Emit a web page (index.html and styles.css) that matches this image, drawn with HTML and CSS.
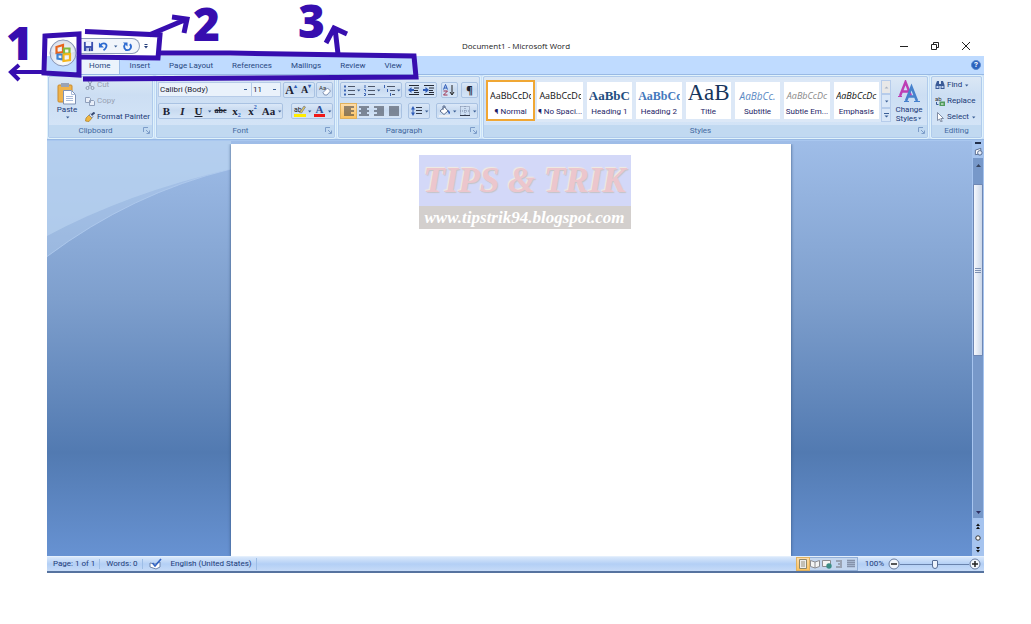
FILE: index.html
```html
<!DOCTYPE html>
<html lang="en">
<head>
    <meta charset="UTF-8">
    <meta name="viewport" content="width=device-width, initial-scale=1.0">
    <title>Document1 - Microsoft Word</title>
    <link rel="stylesheet" href="styles.css">
</head>
<body>
    <!-- shared icons -->
    <svg class="defs" aria-hidden="true">
        <symbol id="caret" viewBox="0 0 5 5"><path d="M1 1.500h3.400L2.700 3.500z" fill="#3b5f96"/></symbol>
        <symbol id="launch" viewBox="0 0 7 7"><path d="M.5 5V.5H5M3 3l3 3M6.500 3.500v3h-3" fill="none" stroke="#7d9dc9"/></symbol>
        <symbol id="lines-left" viewBox="0 0 12 11"><path d="M1 1.500h10M1 3.500h7M1 5.500h10M1 7.500h7M1 9.500h10" stroke="#2b2f3a"/></symbol>
        <symbol id="lines-center" viewBox="0 0 12 11"><path d="M1 1.500h10M3 3.500h6M1 5.500h10M3 7.500h6M1 9.500h10" stroke="#2b2f3a"/></symbol>
        <symbol id="lines-right" viewBox="0 0 12 11"><path d="M1 1.500h10M4 3.500h7M1 5.500h10M4 7.500h7M1 9.500h10" stroke="#2b2f3a"/></symbol>
        <symbol id="lines-full" viewBox="0 0 12 11"><path d="M1 1.500h10M1 3.500h10M1 5.500h10M1 7.500h10M1 9.500h10" stroke="#2b2f3a"/></symbol>
    </svg>

    <div class="window">
        <header class="titlebar">
            <button class="office-button" aria-label="Office Button">
                <svg viewBox="0 0 28 28">
                    <defs>
                        <radialGradient id="orb" cx=".5" cy=".8" r=".8"><stop offset="0" stop-color="#fff"/><stop offset=".55" stop-color="#dfe5f0"/><stop offset="1" stop-color="#a9b4cc"/></radialGradient>
                    </defs>
                    <circle cx="14" cy="14" r="13" fill="url(#orb)" stroke="#8895b5"/>
                    <path d="M2.500 13a11.500 11.500 0 0 1 23 0q-11.500 3-23 0z" fill="#fff" opacity=".55"/>
                    <g fill="none" stroke-width="2.200">
                        <path d="M7.500 8l6.500-2v7l-6.500 1z" stroke="#e8641b"/>
                        <path d="M15 9.500h5.500v5H15z" stroke="#82b93c"/>
                        <path d="M8.500 15.500h5v5l-5-1z" stroke="#3f83d2"/>
                        <path d="M14.500 15.500l6.500-.500v6l-6.500 1z" stroke="#f4b61c"/>
                    </g>
                </svg>
            </button>
            <div class="quick-access">
                <button aria-label="Save"><svg viewBox="0 0 12 12"><path d="M1 1h10v10H1z" fill="#3a4fae"/><path d="M3 1h6v4.500H3z" fill="#eef3ff"/><path d="M3.500 7.500h5V11h-5z" fill="#b9c6ea"/><path d="M6.500 8h1.500v3H6.500z" fill="#26357f"/></svg></button>
                <button aria-label="Undo"><svg viewBox="0 0 12 12"><path d="M2.500 4.500C6 1 10.500 3 9 6.500Q8.300 8.500 6 10" fill="none" stroke="#2e6bd0" stroke-width="2"/><path d="M1 1.500v5.500h5.500z" fill="#2e6bd0"/></svg></button>
                <svg class="caret"><use href="#caret"/></svg>
                <button aria-label="Repeat"><svg viewBox="0 0 12 12"><path d="M3.500 3.500C1 6 3 10 6 10s5.500-4 2.500-6.500" fill="none" stroke="#2e6bd0" stroke-width="2"/><path d="M1 1.500H6V6z" fill="#2e6bd0"/></svg></button>
            </div>
            <button class="customize" aria-label="Customize Quick Access Toolbar"><svg viewBox="0 0 6 8"><path d="M1.500 2.500h3" stroke="#27407c"/><path d="M1 4h4L3 6.500z" fill="#27407c"/></svg></button>
            <h1>Document1 - Microsoft Word</h1>
            <div class="window-buttons">
                <button aria-label="Minimize"><svg viewBox="0 0 10 10"><path d="M1 5.500h8" stroke="#222"/></svg></button>
                <button aria-label="Restore"><svg viewBox="0 0 10 10"><path d="M1.500 3.500h5v5h-5zM3.500 3V1.500h5v5H7" fill="none" stroke="#222"/></svg></button>
                <button aria-label="Close"><svg viewBox="0 0 10 10"><path d="M1 1l8 8M9 1L1 9" stroke="#222"/></svg></button>
            </div>
        </header>

        <nav class="tabs">
            <a href="#" class="active">Home</a>
            <a href="#">Insert</a>
            <a href="#">Page Layout</a>
            <a href="#">References</a>
            <a href="#">Mailings</a>
            <a href="#">Review</a>
            <a href="#">View</a>
            <button class="help" aria-label="Help">?</button>
        </nav>

        <div class="ribbon">
            <section class="group clipboard">
                <div class="tools">
                    <button class="big paste">
                        <svg viewBox="0 0 20 23"><rect x="1" y="3" width="14" height="17" rx="1" fill="#efb34a" stroke="#c98a2c"/><rect x="4" y="1" width="8" height="4" fill="#9aa3b4"/><path d="M6.500 8.500h8l4 4v9.500h-12z" fill="#fff" stroke="#7e92b5"/><path d="M14.500 8.500v4h4M9 14.500h7M9 16.500h7M9 18.500h7" fill="none" stroke="#a9bbd9"/></svg>
                        <span>Paste</span>
                        <svg class="caret"><use href="#caret"/></svg>
                    </button>
                    <div class="stack">
                        <button class="item off"><svg viewBox="0 0 10 10"><path d="M3 1l3.500 6M7 1L3.500 7" stroke="#8f9bb0"/><circle cx="2.500" cy="8" r="1.500" fill="none" stroke="#8f9bb0"/><circle cx="7.500" cy="8" r="1.500" fill="none" stroke="#8f9bb0"/></svg>Cut</button>
                        <button class="item off"><svg viewBox="0 0 10 10"><path d="M.500 1.500h4l1 1v4h-5zM4.500 4.500h4l1 1v4h-5z" fill="#e8eef8" stroke="#8f9fba"/></svg>Copy</button>
                        <button class="item"><svg viewBox="0 0 10 10"><path d="M1 6l3-3 3 3-3 3.500Q2.500 9.500.500 9z" fill="#f0b640" stroke="#a87f2a" stroke-width=".7"/><path d="M4 3l1.500-1.300L8 4.500 7 6z" fill="#dfe6f2" stroke="#5a6d90" stroke-width=".6"/><path d="M6.500 3L9.500.500" stroke="#374b75" stroke-width="2"/></svg>Format Painter</button>
                    </div>
                </div>
                <h2>Clipboard<svg class="launch"><use href="#launch"/></svg></h2>
            </section>

            <section class="group font">
                <div class="tools rows">
                    <div class="row">
                        <div class="combo">
                            <select class="face" aria-label="Font"><option>Calibri (Body)</option></select>
                            <select class="size" aria-label="Font Size"><option>11</option></select>
                        </div>
                        <div class="set serif">
                            <button class="grow" aria-label="Grow Font">A<sup>▴</sup></button>
                            <button class="shrink" aria-label="Shrink Font">A<sup>▾</sup></button>
                        </div>
                        <div class="set">
                            <button aria-label="Clear Formatting"><svg viewBox="0 0 12 12"><text x="0" y="6" font-size="6" fill="#333">Aa</text><path d="M4 8.500L8.500 4 11.500 7 8 11H5.500z" fill="#fff" stroke="#6478a0" stroke-width=".8"/></svg></button>
                        </div>
                    </div>
                    <div class="row">
                        <div class="set serif wide">
                            <button><b>B</b></button>
                            <button><i>I</i></button>
                            <button><u>U</u></button>
                            <svg class="caret"><use href="#caret"/></svg>
                            <button><s>abc</s></button>
                            <button>x<sub>2</sub></button>
                            <button>x<sup>2</sup></button>
                            <button>Aa</button>
                            <svg class="caret"><use href="#caret"/></svg>
                        </div>
                        <div class="set">
                            <button aria-label="Text Highlight Color"><svg viewBox="0 0 12 12"><path d="M0 9h12v3H0z" fill="#ffec00"/><text x="0" y="7" font-size="7" fill="#222">ab</text><path d="M5.500 7.500L10 1l1.500 1L7.500 8z" fill="#e5c95a" stroke="#5a6687" stroke-width=".6"/></svg></button>
                            <svg class="caret"><use href="#caret"/></svg>
                            <button class="font-color" aria-label="Font Color"><span>A</span></button>
                            <svg class="caret"><use href="#caret"/></svg>
                        </div>
                    </div>
                </div>
                <h2>Font<svg class="launch"><use href="#launch"/></svg></h2>
            </section>

            <section class="group paragraph">
                <div class="tools rows">
                    <div class="row">
                        <div class="set">
                            <button aria-label="Bullets"><svg viewBox="0 0 12 12"><path d="M1 2.500h2M1 6.500h2M1 10.500h2" stroke="#3b64b4" stroke-width="2"/><path d="M5 2.500h7M5 6.500h7M5 10.500h7" stroke="#4b5568"/></svg></button>
                            <svg class="caret"><use href="#caret"/></svg>
                            <button aria-label="Numbering"><svg viewBox="0 0 12 12"><path d="M2 1v3M1 5.500h1.500v2M1 9.500h1.500v2H1" fill="none" stroke="#3b64b4"/><path d="M5 2.500h7M5 6.500h7M5 10.500h7" stroke="#4b5568"/></svg></button>
                            <svg class="caret"><use href="#caret"/></svg>
                            <button aria-label="Multilevel List"><svg viewBox="0 0 12 12"><path d="M1.500 1v3M4.500 5v3M7.500 9v3" stroke="#3b64b4"/><path d="M4 2.500h8M7 6.500h5M9 10.500h3" stroke="#4b5568"/></svg></button>
                            <svg class="caret"><use href="#caret"/></svg>
                        </div>
                        <div class="set">
                            <button aria-label="Decrease Indent"><svg viewBox="0 0 12 12"><path d="M1 1.500h10M6 4h5M6 6.500h4M6 8.500h5M1 10.500h10" stroke="#252a36"/><path d="M0 6l3.500-3v2H6v2H3.500v2z" fill="#2f5cb8"/></svg></button>
                            <button aria-label="Increase Indent"><svg viewBox="0 0 12 12"><path d="M1 1.500h10M6 4h5M6 6.500h4M6 8.500h5M1 10.500h10" stroke="#252a36"/><path d="M6 6L2.500 3v2H0v2h2.500v2z" fill="#2f5cb8"/></svg></button>
                        </div>
                        <div class="set">
                            <button aria-label="Sort"><svg viewBox="0 0 12 12"><path d="M.500 5.500L2.500.500l2 5M1 4h3" fill="none" stroke="#2f5cb8"/><path d="M.500 7h4L.500 11h4" fill="none" stroke="#a03050"/><path d="M9 1v9M7 8l2 3 2-3" fill="none" stroke="#222"/></svg></button>
                        </div>
                        <div class="set">
                            <button class="pilcrow" aria-label="Show paragraph marks">¶</button>
                        </div>
                    </div>
                    <div class="row">
                        <div class="set">
                            <button class="on" aria-label="Align Left"><svg><use href="#lines-left"/></svg></button>
                            <button aria-label="Center"><svg><use href="#lines-center"/></svg></button>
                            <button aria-label="Align Right"><svg><use href="#lines-right"/></svg></button>
                            <button aria-label="Justify"><svg><use href="#lines-full"/></svg></button>
                        </div>
                        <div class="set">
                            <button aria-label="Line Spacing"><svg viewBox="0 0 12 12"><path d="M0 4.500L2 1l2 3.500zM0 7.500L2 11l2-3.500z" fill="#2f5cb8"/><path d="M2 4v4" stroke="#2f5cb8"/><path d="M5 2.500h6M5 5.500h6M5 8.500h6" stroke="#333b4c"/></svg></button>
                            <svg class="caret"><use href="#caret"/></svg>
                        </div>
                        <div class="set">
                            <button aria-label="Shading"><svg viewBox="0 0 12 12"><path d="M1 6l4.500-4L9 6 5 9.500z" fill="#fff" stroke="#5b6c8d"/><path d="M4 5V1h2v2" fill="none" stroke="#5b6c8d"/><path d="M9 5q3 2 1.500 4Q9 9 9 5z" fill="#2f5cb8"/><path d="M0 11h11" stroke="#eceff4" stroke-width="2"/></svg></button>
                            <svg class="caret"><use href="#caret"/></svg>
                            <button aria-label="Borders"><svg viewBox="0 0 12 12"><path d="M1.500 1.500h9v9M1.500 1.500v9M6 1v9M1 6h9" fill="none" stroke="#7b8aa6" stroke-dasharray="1 1"/><path d="M1 10.500h10" stroke="#333b4c"/></svg></button>
                            <svg class="caret"><use href="#caret"/></svg>
                        </div>
                    </div>
                </div>
                <h2>Paragraph<svg class="launch"><use href="#launch"/></svg></h2>
            </section>

            <section class="group styles">
                <div class="tools">
                    <div class="gallery">
                        <button class="style selected"><span class="sample">AaBbCcDc</span><span>¶ Normal</span></button>
                        <button class="style"><span class="sample">AaBbCcDc</span><span>¶ No Spaci...</span></button>
                        <button class="style"><span class="sample heading1">AaBbCc</span><span>Heading 1</span></button>
                        <button class="style"><span class="sample heading2">AaBbCc</span><span>Heading 2</span></button>
                        <button class="style"><span class="sample title">AaB</span><span>Title</span></button>
                        <button class="style"><span class="sample subtitle">AaBbCc.</span><span>Subtitle</span></button>
                        <button class="style"><span class="sample subtle">AaBbCcDc</span><span>Subtle Em...</span></button>
                        <button class="style"><span class="sample emphasis">AaBbCcDc</span><span>Emphasis</span></button>
                    </div>
                    <div class="gallery-scroll">
                        <button aria-label="Previous styles" disabled><svg viewBox="0 0 5 5"><path d="M.500 3.500h4l-2-2z" fill="#a9b3c4"/></svg></button>
                        <button aria-label="Next styles"><svg><use href="#caret"/></svg></button>
                        <button aria-label="More styles"><svg viewBox="0 0 5 5"><path d="M0 .500h5" stroke="#3b5f96"/><path d="M.500 2.500h4l-2 2z" fill="#3b5f96"/></svg></button>
                    </div>
                    <button class="big change">
                        <svg viewBox="0 0 22 23"><g fill="none"><path d="M2 16L7.500 2 13 16M4 11.500h7" stroke="#bd3fb4" stroke-width="2.400"/><path d="M0 16.500h4M10 16.500h4" stroke="#bd3fb4"/><path d="M8 21l5.500-14L19 21M10 16.500h7" stroke="#4681cd" stroke-width="2.600"/><path d="M6 21.500h5M16 21.500h6" stroke="#4681cd"/></g></svg>
                        <span>Change<br>Styles<svg class="caret"><use href="#caret"/></svg></span>
                    </button>
                </div>
                <h2>Styles<svg class="launch"><use href="#launch"/></svg></h2>
            </section>

            <section class="group editing">
                <div class="tools">
                    <div class="stack">
                        <button class="item"><svg viewBox="0 0 10 10"><path d="M2 1h2v2l.500 6H.500V5zM6 1h2l1.500 4v4h-4L6 3z" fill="#3a5a96"/><path d="M4 4h2v2H4z" fill="#3a5a96"/><path d="M1.500 6h2v2h-2zM6.500 6h2v2h-2z" fill="#bcd0f0"/></svg>Find<svg class="caret"><use href="#caret"/></svg></button>
                        <button class="item"><svg viewBox="0 0 10 10"><text x="0" y="5" font-size="6" fill="#333">ab</text><path d="M1.500 6v2.500h2" fill="none" stroke="#3a5a96"/><path d="M4.500 5.500H10V10H4.500z" fill="#4f9a5b"/><path d="M6 8h2.500" stroke="#fff"/></svg>Replace</button>
                        <button class="item"><svg viewBox="0 0 10 10"><path d="M2.500.500v8l2-1.500 1.500 3 1.200-.600-1.400-2.900H8.500z" fill="#fff" stroke="#66748f" stroke-width=".8"/></svg>Select<svg class="caret"><use href="#caret"/></svg></button>
                    </div>
                </div>
                <h2>Editing</h2>
            </section>
        </div>

        <main class="workspace">
            <div class="canvas">
                <svg class="swoosh" viewBox="0 0 184 116" aria-hidden="true">
                    <path d="M0 0H184V28Q85 52 0 116z" fill="#b9d2f0" opacity=".4"/>
                    <path d="M0 0H184V28Q80 52 0 95z" fill="#bdd6f2" opacity=".6"/>
                    <path d="M0 115.500Q85 52 184 28" fill="none" stroke="#b4cdf0" opacity=".7"/>
                </svg>
                <article class="page">
                    <div class="watermark">
                        <strong>TIPS &amp; TRIK</strong>
                        <em>www.tipstrik94.blogspot.com</em>
                    </div>
                </article>
            </div>
            <aside class="scroll">
                <span class="split"></span>
                <button class="ruler" aria-label="View Ruler"><svg viewBox="0 0 10 10"><path d="M1.500 3.500l6-2v6l-6 1z" fill="#fff" stroke="#4d6288"/><circle cx="6.500" cy="6.500" r="2.500" fill="#e7eefb" stroke="#4d6288"/></svg></button>
                <div class="track">
                    <button class="up" aria-label="Scroll up"><svg viewBox="0 0 7 5"><path d="M1 4h5L3.500 1z" fill="#36445f"/></svg></button>
                    <div class="thumb"><svg viewBox="0 0 6 6"><path d="M0 1.500h6M0 3.500h6M0 5.500h6" stroke="#7d90b2"/></svg></div>
                    <button class="down" aria-label="Scroll down"><svg viewBox="0 0 7 5"><path d="M1 1h5L3.500 4z" fill="#2e2f62"/></svg></button>
                </div>
                <button aria-label="Previous Page"><svg viewBox="0 0 6 6"><path d="M1 3L3 .500 5 3zM1 6L3 3.500 5 6z" fill="#111"/></svg></button>
                <button aria-label="Select Browse Object"><svg viewBox="0 0 6 6"><circle cx="3" cy="3" r="2.200" fill="#fff" stroke="#333"/></svg></button>
                <button aria-label="Next Page"><svg viewBox="0 0 6 6"><path d="M1 0L3 2.500 5 0zM1 3L3 5.500 5 3z" fill="#111"/></svg></button>
            </aside>
        </main>

        <footer class="statusbar">
            <span>Page: 1 of 1</span>
            <span>Words: 0</span>
            <span><svg class="proof" viewBox="0 0 13 12"><path d="M1 5l5 1 5-2v5L7 11 1 9z" fill="#fff" stroke="#7086ab"/><path d="M3.500 5L6 8l6-7" fill="none" stroke="#3465c4" stroke-width="1.700"/></svg>English (United States)</span>
            <div class="views">
                <button class="on" aria-label="Print Layout"><svg viewBox="0 0 10 10"><path d="M1.500.500h7v9h-7z" fill="#ececec" stroke="#8f8768"/><path d="M3 3h4M3 5h4M3 7h4" stroke="#9a927c"/></svg></button>
                <button aria-label="Full Screen Reading"><svg viewBox="0 0 10 10"><path d="M.500 1.500L5 3l4.500-1.500v6L5 9 .500 7.500zM5 3v6" fill="#f4f4f4" stroke="#8c8c90"/></svg></button>
                <button aria-label="Web Layout"><svg viewBox="0 0 10 10"><path d="M.500 1.500h8v6h-8z" fill="#f4f4f4" stroke="#8c8c90"/><circle cx="7" cy="7" r="2.700" fill="#3c8d86"/></svg></button>
                <button aria-label="Outline"><svg viewBox="0 0 10 10"><path d="M2 2h5v6H2M4 5h4" fill="none" stroke="#9aa3b3" stroke-width="2"/></svg></button>
                <button aria-label="Draft"><svg viewBox="0 0 10 10"><path d="M1 1.500h8M1 3.500h8M1 5.500h8M1 7.500h8" stroke="#8592aa" stroke-width="1.500"/></svg></button>
            </div>
            <label for="zoom">100%</label>
            <button class="round" aria-label="Zoom Out"><svg viewBox="0 0 12 12"><circle cx="6" cy="6" r="5" fill="#f2f6fd" stroke="#667a9f"/><path d="M3 6h6" stroke="#222" stroke-width="1.500"/></svg></button>
            <input id="zoom" type="range" min="0" max="100" value="50">
            <button class="round" aria-label="Zoom In"><svg viewBox="0 0 12 12"><circle cx="6" cy="6" r="5" fill="#f2f6fd" stroke="#667a9f"/><path d="M3 6h6M6 3v6" stroke="#222" stroke-width="1.500"/></svg></button>
        </footer>
    </div>

    <!-- callouts drawn over the window -->
    <svg class="callouts" viewBox="0 0 430 90">
        <g fill="none" stroke="#370eaf" stroke-width="5">
            <path d="M45 36L79 34L79 75L44 73z"/>
            <path d="M42 72L11 72" stroke-width="4"/>
            <path d="M19 65L11 72L19 80" stroke-width="4"/>
            <path d="M85 31.500L160 35L158 58L77 57"/>
            <path d="M149 35L187 19M172 17L187 19L184 33"/>
            <path d="M157 53L230 53L414 56L416 77L83 79"/>
            <path d="M338 54L335 28M326 43L334 28L347 34"/>
        </g>
        <text x="6" y="60">1</text>
        <text x="193" y="41">2</text>
        <text x="298" y="38">3</text>
    </svg>
</body>
</html>
```
FILE: styles.css
```css
* {
    box-sizing: border-box;
}
body {
    margin: 0;
    min-height: 100vh;
    padding: 36px 47px 51px;
    display: flex;
    background: #fff;
    color: #1c3a78;
    font: 8px/10px Roboto, "Open Sans", sans-serif;
}
button {
    display: inline-flex;
    align-items: center;
    justify-content: center;
    margin: 0;
    padding: 0;
    border: 0;
    background: none;
    color: inherit;
    font: inherit;
}
svg {
    display: block;
    flex: none;
}
h1, h2 {
    margin: 0;
    font-size: 8px;
    font-weight: 400;
}
.defs {
    position: absolute;
    width: 0;
    height: 0;
}
.caret {
    width: 5px;
    height: 5px;
}
.window {
    flex: 1;
    min-width: 0;
    display: flex;
    flex-direction: column;
}

/* title bar */
.titlebar {
    position: relative;
    display: flex;
    align-items: center;
    height: 20px;
    padding-left: 32px;
}
.office-button {
    position: absolute;
    left: 2px;
    top: 3px;
    z-index: 2;
}
.office-button svg {
    width: 28px;
    height: 28px;
}
.quick-access {
    display: flex;
    align-items: center;
    gap: 4px;
    height: 16px;
    padding: 0 6px 0 4px;
    border: 1px solid #8e9db8;
    border-left: 0;
    border-radius: 0 8px 8px 0;
    background: #f1f5fb;
}
.quick-access button svg {
    width: 11px;
    height: 11px;
}
.customize {
    margin-left: 3px;
}
.customize svg {
    width: 6px;
    height: 8px;
}
h1 {
    flex: 1;
    color: #222;
    font-family: "Open Sans", sans-serif;
    padding-right: 16px;
    text-align: center;
}
.window-buttons {
    display: flex;
    gap: 21px;
    padding-right: 13px;
}
.window-buttons svg {
    width: 10px;
    height: 10px;
}

/* tabs */
.tabs {
    display: flex;
    height: 18px;
    padding: 0 3px 0 32px;
    background: #bfdbff;
}
.tabs a {
    padding: 5px 9px 0 10px;
    color: #27477f;
    text-decoration: none;
}
.tabs .active {
    border: 1px solid #9dbde6;
    border-bottom: 0;
    border-radius: 3px 3px 0 0;
    padding: 4px 8px 0 9px;
    background: #eaf3fc;
}
.help {
    align-self: center;
    width: 10px;
    height: 10px;
    margin-left: auto;
    border: 1px solid #5b8ad0;
    border-radius: 50%;
    background: #2c63bd;
    color: #fff;
    font-weight: 700;
}

/* ribbon */
.ribbon {
    display: grid;
    grid-template-columns: 105px 179px 142px 1fr 51px;
    gap: 3px;
    padding: 1px 2px 1px 1px;
    border-top: 1px solid #98b9e4;
    border-bottom: 1px solid #98b9e4;
    background: #c9dff8;
}
.group {
    border: 1px solid #b0cbec;
    border-radius: 2px;
    background: linear-gradient(#dbe7f5, #ccdef3 30%, #d6e6f8);
    box-shadow: 0 0 0 1px #e0f2fb;
    min-width: 0;
}
.group h2 {
    position: relative;
    height: 12px;
    padding-right: 10px;
    line-height: 12px;
    background: #c1d9f1;
    color: #44699f;
    text-align: center;
}
.editing h2 {
    padding-right: 0;
}
.launch {
    position: absolute;
    right: 2px;
    top: 2px;
    width: 7px;
    height: 7px;
}
.tools {
    display: flex;
    height: 48px;
}
.big {
    flex-direction: column;
    width: 36px;
}
.paste > svg:first-child {
    width: 20px;
    height: 23px;
}
.stack {
    display: grid;
    grid-template-rows: repeat(3, 16px);
    align-content: start;
}
.item {
    justify-content: flex-start;
    gap: 2px;
    white-space: nowrap;
}
.item > svg:first-child {
    width: 10px;
    height: 10px;
}
.off {
    color: #98a2b3;
}
.rows {
    flex-direction: column;
    gap: 5px;
    padding: 5px 1px 0;
}
.row {
    display: flex;
    justify-content: space-between;
}
.set {
    display: flex;
    align-items: center;
    height: 16px;
    border: 1px solid #a9c2e2;
    border-radius: 2px;
    background: linear-gradient(#dbe8f8, #c8daf0 45%, #d5e5f7);
    color: #1b2130;
}
.set button {
    width: 15px;
    height: 14px;
}
.set button svg {
    width: 12px;
    height: 12px;
}
.wide {
    gap: 1px;
}
.on {
    background: linear-gradient(#fddcaa, #fbc25e);
    outline: 1px solid #e0b25f;
}
.serif {
    font-family: "Liberation Serif", serif;
    font-size: 11px;
    font-weight: 700;
}
.serif s {
    font-size: 8px;
}
.serif sup, .serif sub {
    color: #2f5cb8;
    font-size: 6px;
    line-height: 6px;
}
.serif sup {
    align-self: flex-start;
}
.serif sub {
    align-self: flex-end;
}
.serif .grow {
    font-size: 12px;
}
.serif .shrink {
    font-size: 10px;
}
.font-color span {
    border-bottom: 3px solid #f01818;
    padding: 0 2px;
    color: #2d4f97;
    font: 700 11px/9px "Liberation Serif", serif;
}
.pilcrow {
    font: 700 10px/12px "Open Sans", sans-serif;
}
.combo {
    display: flex;
}
select {
    appearance: none;
    height: 15px;
    margin: 0;
    padding: 0 1px;
    border: 1px solid #b7cce8;
    border-radius: 0;
    background: #eaf2fb linear-gradient(#3b5f96, #3b5f96) right 4px center / 3px 1px no-repeat;
    color: #1b2130;
    font: inherit;
}
.face {
    width: 94px;
}
.size {
    width: 29px;
    border-left: 0;
}

/* styles gallery */
.styles .tools {
    padding-left: 2px;
}
.gallery {
    flex: 1;
    display: grid;
    grid-template-columns: repeat(8, 1fr);
    margin: 3px 0;
    background: #dce8f7;
    min-width: 0;
}
.style {
    flex-direction: column;
    justify-content: flex-end;
    gap: 3px;
    min-width: 0;
    margin: 2px 2px 3px;
    padding: 0 2px 2px;
    overflow: hidden;
    background: #fff;
    color: #1c1c66;
    white-space: nowrap;
}
.selected {
    outline: 2px solid #f0a734;
}
.sample {
    display: block;
    width: 100%;
    overflow: hidden;
    color: #111;
    font-family: "Open Sans", sans-serif;
    font-size: 9px;
    line-height: 16px;
}
.heading1, .heading2 {
    color: #1f4e80;
    font-family: "Liberation Serif", serif;
    font-size: 13px;
    font-weight: 700;
}
.heading2 {
    color: #4479bd;
    font-size: 12px;
}
.title {
    color: #17365d;
    font-family: "Liberation Serif", serif;
    font-size: 23px;
    line-height: 22px;
}
.subtitle, .subtle, .emphasis {
    font-style: italic;
}
.subtitle {
    color: #5a8ac4;
    font-size: 10px;
}
.subtle {
    color: #888;
}
.gallery-scroll {
    display: grid;
    grid-template-rows: repeat(3, 1fr);
    width: 10px;
    margin: 3px 0;
}
.gallery-scroll button {
    border: 1px solid #b6cceb;
    background: #d9e7f8;
}
.gallery-scroll button:disabled {
    background: #e8e8e8;
}
.gallery-scroll svg {
    width: 5px;
    height: 5px;
}
.change {
    gap: 2px;
}
.change > svg {
    width: 22px;
    height: 23px;
}
.change span {
    line-height: 9px;
}
.change .caret {
    display: inline-block;
}
.editing .stack {
    padding-left: 3px;
}

/* document area */
.workspace {
    flex: 1;
    display: flex;
    min-height: 200px;
}
.canvas {
    position: relative;
    flex: 1;
    display: flex;
    justify-content: center;
    padding: 3px 0 0 2px;
    background: linear-gradient(#9fbde8, #7e9fcd 38%, #527ab1 75%, #6792d2);
    border-top: 1px solid #a9c7ef;
}
.swoosh {
    position: absolute;
    left: 0;
    top: 0;
    width: 184px;
    height: 116px;
}
.page {
    position: relative;
    width: 560px;
    padding-top: 11px;
    background: #fff;
    box-shadow: 0 0 3px #36557f;
    clip-path: inset(0 -4px);
}
.watermark {
    width: 212px;
    margin: 0 auto 0 188px;
    background: #d3cfcd;
    color: #fff;
    font-family: "Liberation Serif", serif;
    text-align: center;
    white-space: nowrap;
}
.watermark strong {
    display: block;
    background: #d3d8f8;
    color: #ecc6cd;
    font-size: 35px;
    font-style: italic;
    line-height: 51px;
    text-shadow: 1px 1px 1px #c4c4c8, -1px -1px 1px #f1ecdf;
}
.watermark em {
    display: block;
    font-size: 17px;
    font-weight: 700;
    line-height: 23px;
}
.scroll {
    display: flex;
    flex-direction: column;
    align-items: center;
    width: 12px;
    padding: 2px 1px 0;
    background: #a6c4ef;
}
.scroll > button {
    height: 12px;
}
.scroll > button svg {
    width: 6px;
    height: 6px;
}
.split {
    width: 6px;
    height: 2px;
    background: #222f4b;
}
.scroll .ruler {
    height: 14px;
}
.scroll .ruler svg {
    width: 9px;
    height: 9px;
}
.track {
    flex: 1;
    align-self: stretch;
    display: grid;
    grid-template-rows: 26px 53fr 50fr;
    margin-bottom: 2px;
    background: #7798c9;
}
.up, .down {
    align-items: flex-start;
    padding-top: 5px;
}
.down {
    align-items: flex-end;
    padding-bottom: 3px;
}
.up svg, .down svg {
    width: 7px;
    height: 5px;
}
.thumb {
    display: grid;
    place-items: center;
    border: 1px solid #6e87b4;
    border-radius: 1px;
    background: linear-gradient(90deg, #f5f8fd, #cbd7e9);
}
.thumb svg {
    width: 6px;
    height: 6px;
}

/* status bar */
.statusbar {
    display: flex;
    align-items: center;
    height: 17px;
    border-top: 1px solid #e4effc;
    border-bottom: 2px solid #56739f;
    background: linear-gradient(#d9e8fb, #b3cff5 50%, #c6dbf8);
}
.statusbar > span {
    display: flex;
    align-items: center;
    gap: 9px;
    padding: 0 4px 0 6px;
    border-right: 1px solid #9dbde6;
}
.proof {
    width: 13px;
    height: 12px;
}
.views {
    display: flex;
    margin-left: auto;
    margin-right: 7px;
    border: 1px solid #92afd7;
    background: #c3d6ef;
}
.views button {
    width: 12px;
    height: 12px;
}
.views svg {
    width: 10px;
    height: 10px;
}
.round {
    margin-left: 4px;
}
.round svg {
    width: 12px;
    height: 12px;
}
.round:last-child {
    margin: 0 3px 0 0;
}
input[type=range] {
    appearance: none;
    width: 69px;
    height: 12px;
    margin: 0;
    background: linear-gradient(#6983ad, #6983ad) center / 100% 1px no-repeat;
}
input[type=range]::-webkit-slider-thumb {
    appearance: none;
    width: 6px;
    height: 9px;
    border: 1px solid #576d95;
    border-radius: 1px 1px 3px 3px;
    background: #eef3fb;
}

/* callouts */
.callouts {
    position: absolute;
    left: 0;
    top: 0;
    z-index: 3;
    width: 430px;
    height: 90px;
    pointer-events: none;
}
.callouts text {
    fill: #370eaf;
    font: 800 46px "Open Sans", sans-serif;
}
```
